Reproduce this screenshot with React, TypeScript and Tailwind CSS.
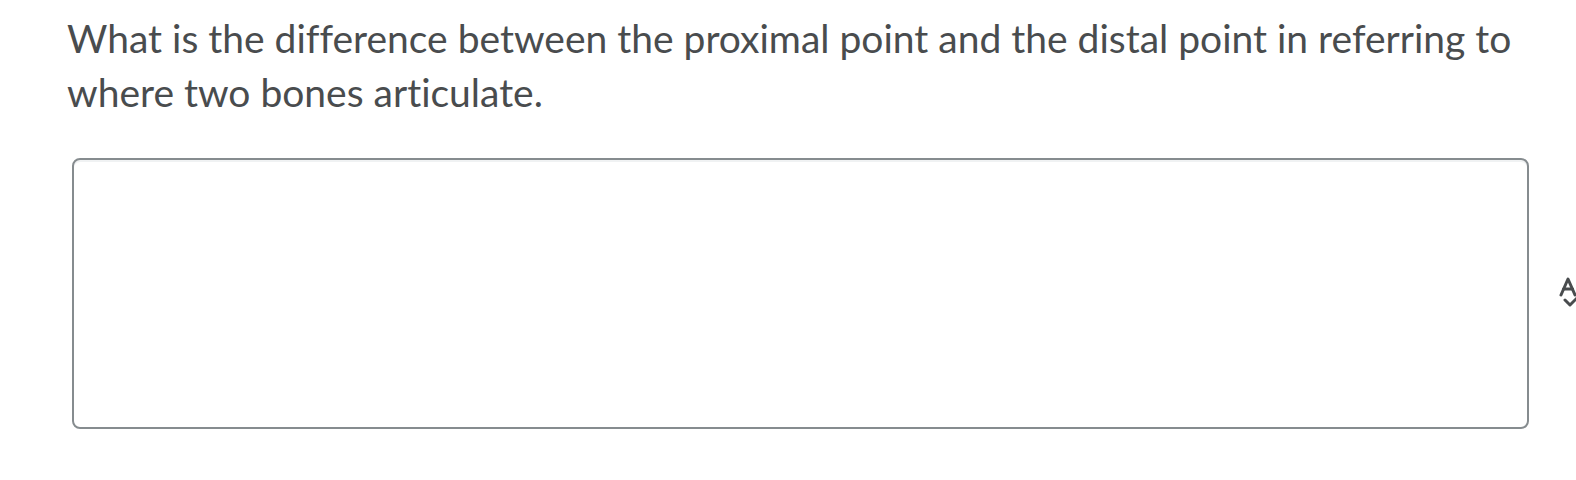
export default function App() {
  return (
    <div className="w-[1576px] h-[480px] overflow-hidden bg-white font-['Lato','Liberation_Sans',sans-serif] text-[#494c4e] [font-variant-ligatures:none]">
      <div className="pl-[67px] pt-[11px]">
        <p className="text-[39px] leading-[54px] w-[1462px]">
          What is the difference between the proximal point and the distal point in referring to where two bones articulate.
        </p>
      </div>
      <div className="flex items-center mt-[39px] pl-[72px]">
        <textarea
          className="shrink-0 w-[1457px] h-[271px] resize-none rounded-[8px] border-2 border-[#868c8f] bg-white shadow-[inset_0_2px_0_0_rgba(181,189,194,0.2)] outline-none"
        />
        <div className="shrink-0 ml-[30px] mt-[-2px]">
          <svg width="30" height="32" viewBox="0 0 30 32" fill="none" stroke="#494c4e" strokeWidth="3" strokeLinecap="round" strokeLinejoin="round">
            <path d="M2 18 L9 2 L16 18" />
            <path d="M4.5 12 H13.5" />
            <path d="M6 23 L11 28 L20 19" />
          </svg>
        </div>
      </div>
    </div>
  );
}
